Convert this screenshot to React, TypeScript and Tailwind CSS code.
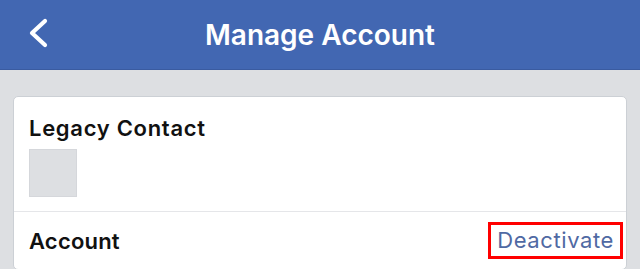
export default function App() {
    return (
        <div className="w-[640px] h-[269px] overflow-hidden bg-[#dddfe2] font-['Inter','Noto_Sans',sans-serif]">
            {/* header */}
            <div className="relative flex h-[70px] items-center justify-center bg-[#4267b2] border-b border-[#3a5ba0]">
                <button className="absolute left-[22px] top-[16px] text-white">
                    <svg width="34" height="34" viewBox="0 0 34 34" fill="none">
                        <path d="M23 5 L10 17 L23 29" stroke="currentColor" strokeWidth="4.2" strokeLinecap="round" strokeLinejoin="round" />
                    </svg>
                </button>
                <h1 className="text-[28px] font-semibold tracking-[0px] text-white">Manage Account</h1>
            </div>

            {/* card */}
            <div className="mx-[13px] mt-[26px] rounded-[5px] border border-[#ccd0d5] bg-white">
                <div className="px-[15px] pt-[17px] pb-[14px]">
                    <p className="text-[22px] leading-[28px] font-semibold tracking-[0.7px] text-[#111]">Legacy Contact</p>
                    <div className="mt-[7px] h-[48px] w-[48px] border border-[#d5d7db] bg-[#dddfe2]" />
                </div>
                <div className="flex items-center justify-between border-t border-[#e5e6e9] pl-[15px] pr-[3px] pt-[10px] pb-[10px]">
                    <span className="text-[22px] leading-[28px] font-semibold tracking-[0.2px] text-[#111]">Account</span>
                    <span className="border-[3px] border-[#ff0000] px-[6px] py-[2px] text-[22px] leading-[27px] tracking-[0.6px] text-[#4f69a3]">
                        Deactivate
                    </span>
                </div>
            </div>
        </div>
    )
}
